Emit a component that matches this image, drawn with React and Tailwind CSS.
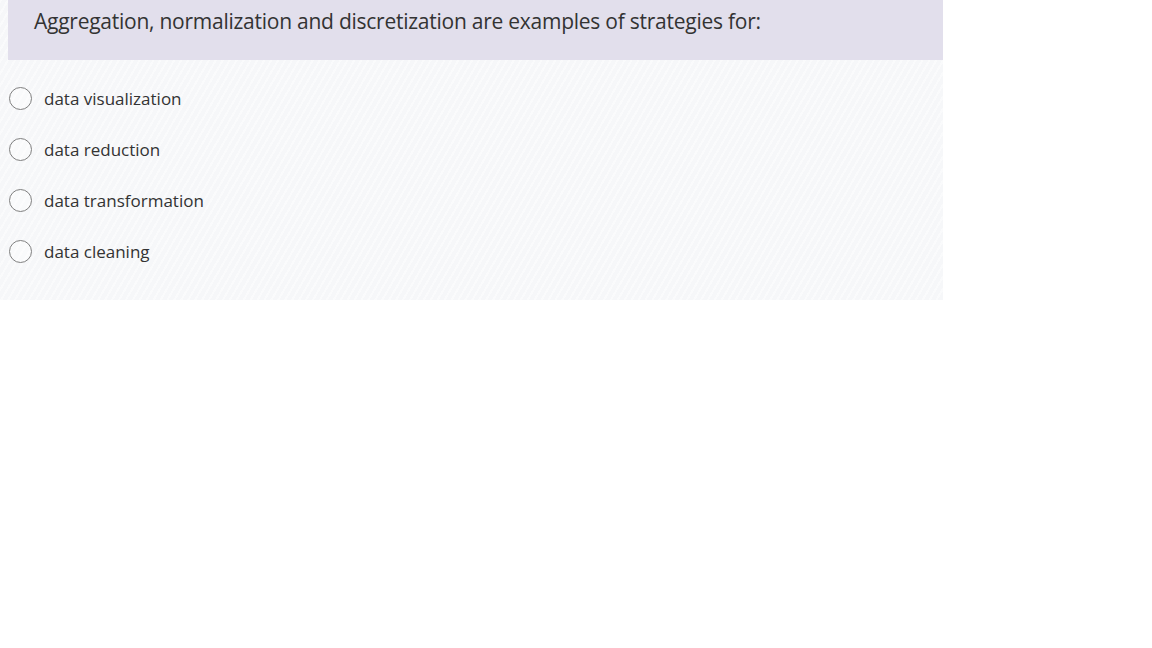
const options = [
  "data visualization",
  "data reduction",
  "data transformation",
  "data cleaning",
];

function Radio() {
  return (
    <span className="block w-[23px] h-[23px] rounded-full border-[1.5px] border-[#808080] bg-white/40 shrink-0" />
  );
}

export default function App() {
  return (
    <div
      className="w-[943px] h-[300px] bg-[#f6f7f9] bg-[repeating-linear-gradient(120deg,rgba(255,255,255,0.45)_0px,rgba(255,255,255,0.45)_2px,transparent_2px,transparent_6px)] text-[#333]"
      style={{ fontFamily: '"Open Sans", "Noto Sans", sans-serif' }}
    >
      <div className="ml-2 h-[60px] bg-[#e2dfec] flex items-start pl-[26px] pt-[7px]">
        <h1 className="text-[21px] leading-[28px] tracking-[-0.25px] text-[#333]">
          Aggregation, normalization and discretization are examples of strategies for:
        </h1>
      </div>
      <ul className="pt-[27px] flex flex-col gap-[28px]">
        {options.map((opt) => (
          <li key={opt} className="flex items-center gap-[12px] pl-[9px] h-[23px]">
            <Radio />
            <span className="text-[17px] leading-[23px] text-[#333]">{opt}</span>
          </li>
        ))}
      </ul>
    </div>
  );
}
